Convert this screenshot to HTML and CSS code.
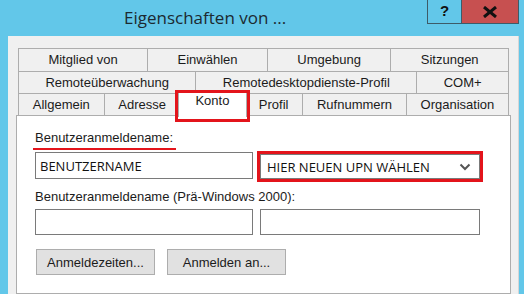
FILE: index.html
```html
<!DOCTYPE html>
<html lang="de">
<head>
    <meta charset="UTF-8">
    <title>Eigenschaften von ...</title>
    <link rel="stylesheet" href="styles.css">
</head>
<body>

    <div class="titlebar">
        <div class="title">Eigenschaften von ...</div>
        <div class="caption-buttons">
            <div class="btn-help">?</div>
            <div class="btn-close">
                <svg width="18" height="12" viewBox="0 0 18 12">
                    <path d="M3 1 L15 11 M15 1 L3 11" stroke="#111" stroke-width="3" fill="none" />
                </svg>
            </div>
        </div>
    </div>

    <div class="dialog">
        <div class="tabs">
            <div class="tab-row first">
                <div class="tab">Mitglied von</div>
                <div class="tab">Einwählen</div>
                <div class="tab">Umgebung</div>
                <div class="tab">Sitzungen</div>
            </div>
            <div class="tab-row">
                <div class="tab">Remoteüberwachung</div>
                <div class="tab">Remotedesktopdienste-Profil</div>
                <div class="tab">COM+</div>
            </div>
            <div class="tab-row">
                <div class="tab">Allgemein</div>
                <div class="tab">Adresse</div>
                <div class="tab active">Konto</div>
                <div class="tab">Profil</div>
                <div class="tab">Rufnummern</div>
                <div class="tab">Organisation</div>
            </div>
        </div>

        <div class="panel">
            <span class="label marked">Benutzeranmeldename:</span>
            <div class="field-row">
                <input type="text" class="textbox" value="BENUTZERNAME">
                <div class="select-mark">
                    <div class="select">
                        <span>HIER NEUEN UPN WÄHLEN</span>
                        <svg width="12" height="8" viewBox="0 0 12 8">
                            <path d="M1.5 1.5 L6 6 L10.5 1.5" stroke="#555" stroke-width="2" fill="none" />
                        </svg>
                    </div>
                </div>
            </div>

            <div class="label second">Benutzeranmeldename (Prä-Windows 2000):</div>
            <div class="field-row short">
                <input type="text" class="textbox" value="">
                <input type="text" class="textbox wide" value="">
            </div>

            <div class="button-row">
                <button>Anmeldezeiten...</button>
                <button>Anmelden an...</button>
            </div>
        </div>
    </div>

</body>
</html>
```

FILE: styles.css
```css
body {
    margin: 0;
    width: 524px;
    height: 294px;
    overflow: hidden;
    background-color: #62c7e9;
    font-family: "Liberation Sans", Arial, sans-serif;
    font-size: 13px;
    color: #1b1b1b;
}
.titlebar {
    display: flex;
    height: 36px;
}
.title {
    flex: 1;
    padding-left: 124px;
    padding-top: 6px;
    font-family: "Open Sans", sans-serif;
    font-size: 17px;
    color: #1c2a31;
}
.caption-buttons {
    display: flex;
    height: 24px;
    margin-right: 5px;
}
.btn-help {
    width: 35px;
    box-sizing: border-box;
    border: 1px solid #3d5b68;
    border-top: none;
    text-align: center;
    font-weight: bold;
    font-size: 15px;
    line-height: 22px;
    color: #111;
}
.btn-close {
    width: 57px;
    box-sizing: border-box;
    background-color: #c75050;
    border: 1px solid #3d5b68;
    border-top: none;
    border-left: none;
    display: flex;
    align-items: center;
    justify-content: center;
}
.dialog {
    margin: 0 5px 0 8px;
    height: 258px;
    box-sizing: border-box;
    padding: 12px 7px 0 8px;
    background-color: #f0f0f0;
    border-right: 1px solid #d6d6d6;
    display: flex;
    flex-direction: column;
}
.tabs {
    margin: 0 2px;
}
.tab-row {
    display: flex;
    height: 22px;
}
.tab-row.first {
    height: 23px;
}
.tab {
    flex: 1 1 auto;
    border: 1px solid #adadad;
    border-bottom: none;
    margin-left: -1px;
    text-align: center;
    line-height: 21px;
    background-color: #f0f0f0;
    white-space: nowrap;
}
.tab:first-child {
    margin-left: 0;
}
.tab.active {
    position: relative;
    z-index: 1;
    background-color: #fff;
    margin: -2px -2px 0 -3px;
    padding: 0 3px;
    height: 25px;
    line-height: 18px;
}
/* rote Markierung */
.tab.active::after {
    content: "";
    position: absolute;
    left: -4px;
    right: -4px;
    top: -2px;
    bottom: -5px;
    border: 3px solid #e3141b;
}
.panel {
    flex: 1;
    background-color: #fff;
    border: 1px solid #adadad;
    padding: 14px 0 0 18px;
}
.label {
    line-height: 15px;
}
.label.marked {
    display: inline-block;
    margin-left: -2px;
    padding: 0 3px 3px 2px;
    border-bottom: 2px solid #e3141b;
}
.label.second {
    margin-top: 10px;
}
.field-row {
    display: flex;
    align-items: flex-start;
    gap: 4px;
    height: 27px;
    margin-top: 2px;
}
.field-row.short {
    gap: 7px;
    height: 26px;
    margin-top: 5px;
}
.textbox {
    width: 218px;
    height: 100%;
    box-sizing: border-box;
    margin: 0;
    border: 1px solid #7a7a7a;
    padding: 0 4px;
    font-family: "Open Sans", sans-serif;
    font-size: 13px;
    color: #111;
    background: #fff;
    outline: none;
}
.textbox.wide {
    width: 220px;
}
.select-mark {
    width: 226px;
    height: 31px;
    box-sizing: border-box;
    margin-top: -1px;
    border: 3px solid #e3141b;
}
.select {
    height: 100%;
    box-sizing: border-box;
    border: 1px solid #7a7a7a;
    display: flex;
    align-items: center;
    justify-content: space-between;
    padding: 0 8px 0 6px;
    font-family: "Open Sans", sans-serif;
    font-size: 13px;
    color: #111;
}
.button-row {
    display: flex;
    gap: 12px;
    margin-top: 14px;
    padding-left: 1px;
}
button {
    width: 119px;
    height: 26px;
    background-color: #e1e1e1;
    border: 1px solid #adadad;
    font-family: "Liberation Sans", Arial, sans-serif;
    font-size: 13px;
    color: #1b1b1b;
    padding: 0;
}
```
